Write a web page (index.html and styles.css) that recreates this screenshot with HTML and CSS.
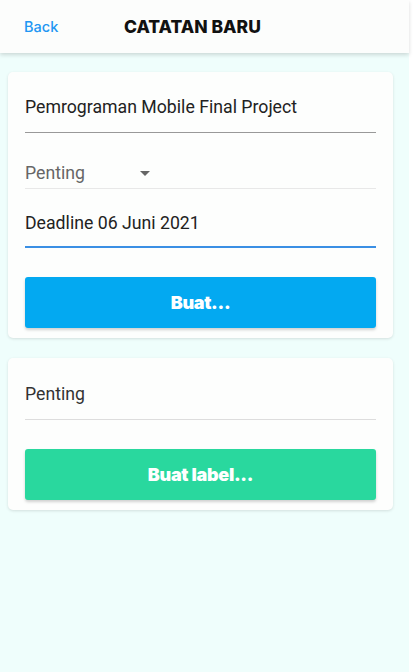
FILE: index.html
```html
<!DOCTYPE html>
<html>
<head>
<meta charset="UTF-8">
<meta name="viewport" content="width=device-width, initial-scale=1.0">
<title>Catatan Baru</title>
<link rel="stylesheet" href="styles.css">
</head>
<body>
  <div class="app">
    <header class="topbar">
      <a class="back" href="#">Back</a>
      <h1 class="title">CATATAN BARU</h1>
    </header>

    <main class="content">
      <div class="card">
        <div class="field field-dark">Pemrograman Mobile Final Project</div>
        <div class="field field-select">
          <span>Penting</span>
          <span class="arrow"></span>
        </div>
        <div class="field field-active">Deadline 06 Juni 2021</div>
        <button class="btn btn-blue">Buat...</button>
      </div>

      <div class="card">
        <div class="field field-light">Penting</div>
        <button class="btn btn-green">Buat label...</button>
      </div>
    </main>
  </div>
</body>
</html>
```

FILE: styles.css
```css
:root {
  --bg-color: #effefc;
  --blue: #2196f3;
  --text-color: #222;
}

body {
  margin: 0;
  background: #fff;
  font-family: Roboto, "Liberation Sans", sans-serif;
  color: var(--text-color);
}

.app {
  width: 409px;
  min-height: 672px;
  background: var(--bg-color);
}

.topbar {
  height: 53px;
  background: #fcfdfc;
  box-shadow: 0 2px 4px rgba(0,0,0,0.15);
  display: flex;
  align-items: center;
  padding-left: 24px;
}

.back {
  color: var(--blue);
  text-decoration: none;
  font-family: Inter, sans-serif;
  font-size: 14.5px;
  font-weight: 500;
  width: 100px;
}

.title {
  margin: 0;
  font-family: Inter, sans-serif;
  font-size: 17.5px;
  font-weight: 800;
  color: #111;
}

.content {
  padding: 19px 16px 0 8px;
  display: flex;
  flex-direction: column;
  gap: 20px;
}

.card {
  background: #fdfefd;
  border-radius: 5px;
  box-shadow: 0 1px 3px rgba(0,0,0,0.12);
  padding: 10px 17px;
}

.field {
  font-size: 17.7px;
  height: 50px;
  display: flex;
  align-items: center;
  border-bottom: 1px solid #ddd;
  box-sizing: border-box;
}

.field-dark {
  height: 51px;
  border-bottom-color: #999;
}

.field-select {
  color: #666;
  height: 56px;
  padding-top: 25px;
  border-bottom-color: #e8e8e8;
}

.arrow {
  margin-left: 55px;
  border-left: 5px solid transparent;
  border-right: 5px solid transparent;
  border-top: 5px solid #666;
}

.field-active {
  height: 59px;
  padding-top: 10px;
  border-bottom: 2px solid #3a8fe4;
}

.field-light {
  color: #333;
  height: 52px;
}

.btn {
  display: block;
  width: 100%;
  height: 51px;
  margin: 29px 0 0;
  border: none;
  border-radius: 3px;
  color: #fff;
  font-family: Inter, sans-serif;
  font-size: 18px;
  font-weight: 900;
  letter-spacing: -0.3px;
  box-shadow: 0 2px 3px rgba(0,0,0,0.18);
}

.btn-blue {
  background: #03a9f1;
}

.btn-green {
  background: #29d89e;
}
```
